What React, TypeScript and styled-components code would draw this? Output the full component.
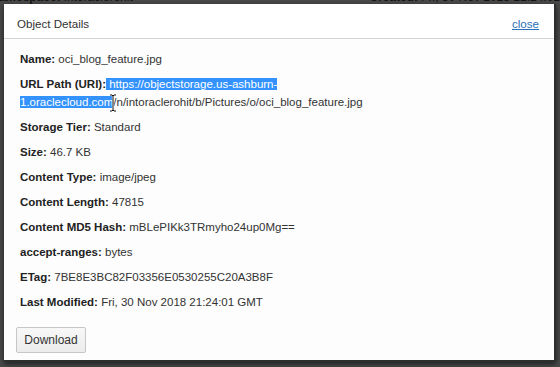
import React, { FC } from 'react';
import styled, { createGlobalStyle } from 'styled-components';

const GlobalStyle = createGlobalStyle`
  html, body {
    margin: 0;
    padding: 0;
    width: 560px;
    height: 367px;
    overflow: hidden;
    background: #464646;
    font-family: "Liberation Sans", Arial, Helvetica, sans-serif;
  }
`;

const Screen = styled.div`
  position: relative;
  width: 560px;
  height: 367px;
  overflow: hidden;
  background: #4a4a4a;
`;

const BackPage = styled.div`
  display: flex;
  justify-content: space-between;
  margin-top: -11px;
  font-size: 12px;
  line-height: 16px;
  color: #141414;
`;

const BackItem = styled.span<{ $left: number }>`
  margin-left: ${p => p.$left}px;
  white-space: nowrap;
  b { font-weight: bold; }
`;

const Modal = styled.div`
  position: absolute;
  top: 4px;
  left: 4px;
  width: 552px;
  height: 358px;
  box-sizing: border-box;
  background: #fdfdfd;
  border-right: 2px solid #2e2e2e;
  border-bottom: 2px solid #2e2e2e;
  box-shadow: 0 2px 6px rgba(0, 0, 0, 0.6);
  display: flex;
  flex-direction: column;
`;

const Header = styled.div`
  display: flex;
  align-items: center;
  justify-content: space-between;
  height: 30px;
  padding: 4px 15px 0 13px;
  border-bottom: 1px solid #d4d4d4;
  background: #fff;
`;

const Title = styled.span`
  font-size: 11.6px;
  color: #333;
`;

const CloseLink = styled.a`
  font-size: 11.6px;
  color: #2a6fb8;
  text-decoration: underline;
  cursor: pointer;
`;

const Body = styled.div`
  padding: 11px 16px 0 16px;
`;

const Row = styled.p`
  position: relative;
  margin: 0 0 7px 0;
  font-size: 11.5px;
  line-height: 18px;
  color: #333;
`;

const Label = styled.b`
  font-weight: bold;
  color: #222;
`;

const Selected = styled.span`
  background: #3392fd;
  color: #fff;
`;

const IBeam = styled.svg`
  position: absolute;
  left: 89px;
  top: 19px;
`;

const Footer = styled.div`
  padding: 9px 12px 0 12px;
`;

const Button = styled.button`
  width: 70px;
  height: 26px;
  font-family: "Liberation Sans", Arial, sans-serif;
  font-size: 12px;
  color: #333;
  background: linear-gradient(#f8f8f8, #ececec);
  border: 1px solid #c6c6c6;
  border-radius: 2px;
  padding: 0;
`;

interface Field {
  label: string;
  value: string;
}

const fields: Field[] = [
  { label: 'Storage Tier:', value: 'Standard' },
  { label: 'Size:', value: '46.7 KB' },
  { label: 'Content Type:', value: 'image/jpeg' },
  { label: 'Content Length:', value: '47815' },
  { label: 'Content MD5 Hash:', value: 'mBLePIKk3TRmyho24up0Mg==' },
  { label: 'accept-ranges:', value: 'bytes' },
  { label: 'ETag:', value: '7BE8E3BC82F03356E0530255C20A3B8F' },
  { label: 'Last Modified:', value: 'Fri, 30 Nov 2018 21:24:01 GMT' },
];

const App: FC = () => (
  <Screen>
    <GlobalStyle />
    <BackPage>
      <BackItem $left={-10}>
        <b>Namespace:</b> intoraclerohit
      </BackItem>
      <BackItem $left={0}>
        <b>Created:</b> Fri, 30 Nov 2018 21:24:01
      </BackItem>
    </BackPage>
    <Modal>
      <Header>
        <Title>Object Details</Title>
        <CloseLink>close</CloseLink>
      </Header>
      <Body>
        <Row>
          <Label>Name:</Label> oci_blog_feature.jpg
        </Row>
        <Row>
          <Label>URL Path (URI):</Label>
          <Selected> https://objectstorage.us-ashburn-1.oraclecloud.com</Selected>/n/intoraclerohit/b/Pictures/o/oci_blog_feature.jpg
          <IBeam width="8" height="18" viewBox="0 0 8 18">
            <path d="M1 1h2l1 1 1-1h2M4 2v14M1 17h2l1-1 1 1h2" fill="none" stroke="#fff" strokeWidth="2.2" />
            <path d="M1 1h2l1 1 1-1h2M4 2v14M1 17h2l1-1 1 1h2" fill="none" stroke="#111" strokeWidth="1" />
          </IBeam>
        </Row>
        {fields.map(f => (
          <Row key={f.label}>
            <Label>{f.label}</Label> {f.value}
          </Row>
        ))}
      </Body>
      <Footer>
        <Button>Download</Button>
      </Footer>
    </Modal>
  </Screen>
);

export default App;
